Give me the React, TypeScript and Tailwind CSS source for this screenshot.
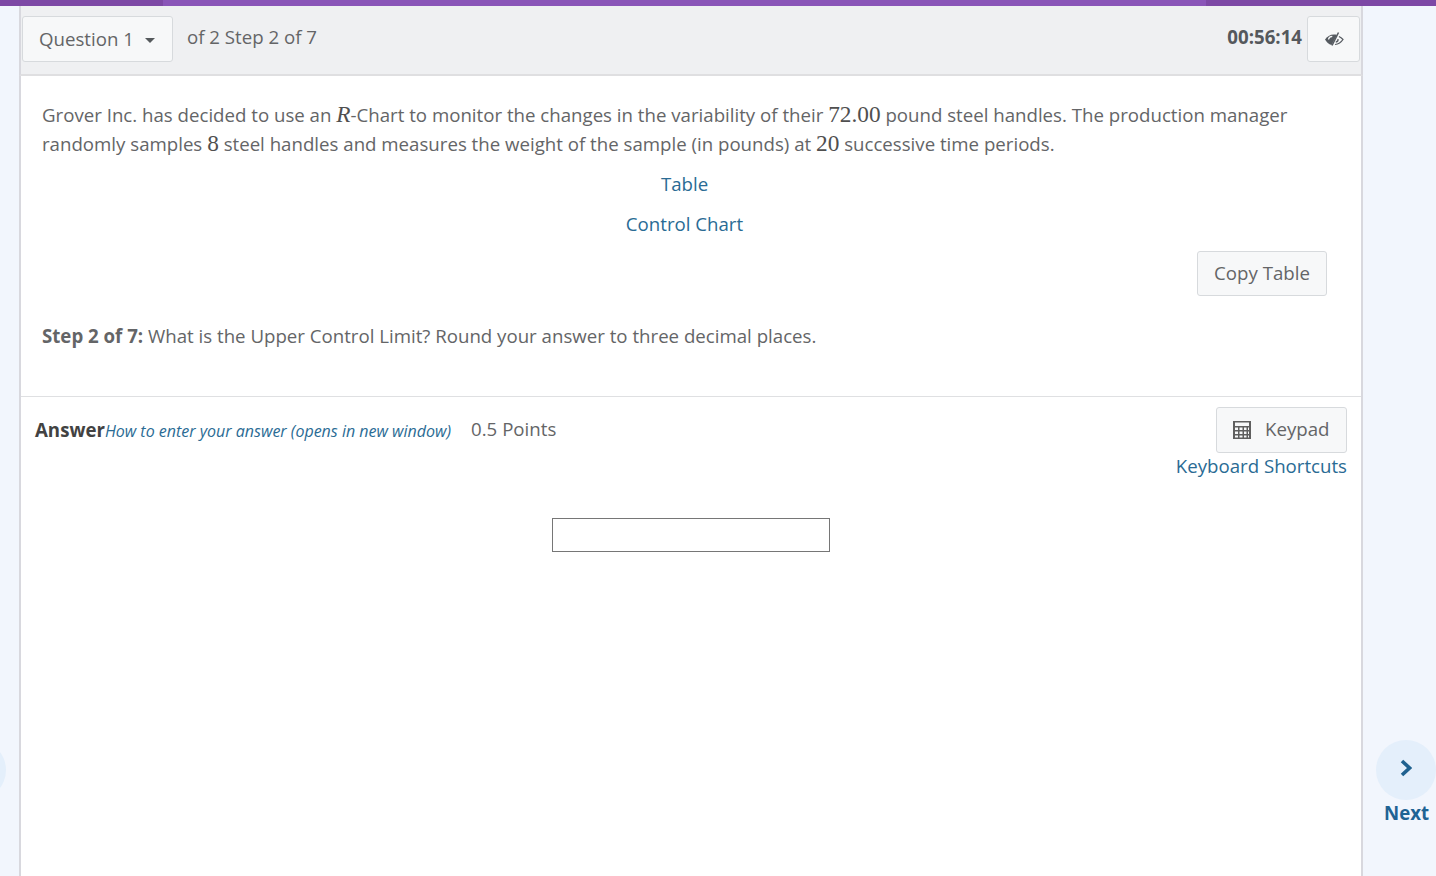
import React from "react";

const font = { fontFamily: '"Open Sans", sans-serif' };

function EyeSlash() {
  return (
    <svg width="20" height="16" viewBox="0 0 20 16" fill="none">
      <path d="M1 8.500C3 5.500 6 3.500 10 3.500c1 0 2 .1 3 .5L7.500 14C4.700 13.200 2.500 11 1 8.500Z" fill="#555a60" />
      <path d="M4.500 8.500c.2-1.800 1.500-3 3.800-3.200" stroke="#f7f8f9" strokeWidth="1.300" />
      <path d="M14.500 1.500 8 14.500" stroke="#555a60" strokeWidth="1.500" />
      <path d="M15 5.500c1.500.8 2.800 1.800 4 3-1.700 2.600-4.500 4.600-8 5" stroke="#555a60" strokeWidth="1.200" />
      <path d="M14 8c.3 1.500-.6 2.800-2.200 3.200" stroke="#555a60" strokeWidth="1.200" />
    </svg>
  );
}

function Calc() {
  return (
    <svg width="18" height="19" viewBox="0 0 18 19" className="mb-[2px]">
      <path fillRule="evenodd" fill="#5f5f5f" d="M0 1h18v18H0V1Zm2 1.500v3.500h14V2.500H2ZM2 7.500v2.500h3V7.500H2Zm4.500 0v2.500h3V7.500h-3Zm4.500 0v2.500h2.500V7.500H11Zm4 0v2.500h1V7.500h-1ZM2 11.500V14h3v-2.500H2Zm4.500 0V14h3v-2.500h-3Zm4.500 0V14h2.500v-2.500H11Zm4 0V14h1v-2.500h-1ZM2 15.500v2h3v-2H2Zm4.500 0v2h3v-2h-3Zm4.500 0v2h2.500v-2H11Zm4 0v2h1v-2h-1Z" />
    </svg>
  );
}

const M = ({ children, i }: { children: React.ReactNode; i?: boolean }) => (
  <span className={`font-['Liberation_Serif',serif] text-[23.3px] leading-none text-[#4f4f4f] ${i ? "italic" : ""}`}>{children}</span>
);

export default function App() {
  return (
    <div
      className="relative h-[876px] w-[1436px] overflow-hidden bg-[#f2f6fd] text-[18.67px] text-[#646567]"
      style={font}
    >
      <div className="flex h-[6px]">
        <div className="w-[163px] bg-[#7d48a5]" />
        <div className="w-[1043px] bg-[#8a55b8]" />
        <div className="flex-1 bg-[#7d48a5]" />
      </div>

      <div className="ml-[19px] w-[1344px]">
        <header className="flex h-[70px] items-start border-b-2 border-[#dfdfe1] border-l-2 border-r-2 border-l-[#d8d8de] border-r-[#d8d8de] bg-[#eff0f2] pl-[1px] pt-[10px]">
          <button className="flex h-[46px] w-[151px] items-center rounded-[3px] border border-[#d7dadd] bg-[#f7f8f9] pl-4 text-[#646567]">
            <span className="leading-none">Question 1</span>
            <span className="ml-[11px] mt-[3px] h-0 w-0 border-x-[5.5px] border-t-[5px] border-x-transparent border-t-[#55595c]" />
          </button>
          <span className="ml-[14px] mt-[7px] leading-[28px]">of 2 Step 2 of 7</span>
          <span className="ml-auto mt-[7px] text-[18.67px] font-bold leading-[28px] text-[#55585c]">00:56:14</span>
          <button className="ml-[5px] mr-[1px] flex h-[46px] w-[53px] items-center justify-center rounded-[3px] border border-[#d7dadd] bg-[#f7f8f9]">
            <EyeSlash />
          </button>
        </header>

        <main className="h-[800px] border-x-2 border-[#d8d8de] bg-white">
          <section className="h-[321px] border-b border-[#dfe0e2] px-[21px] pt-[24px]">
            <p className="leading-[29px]">
              Grover Inc. has decided to use an <M i>R</M>-Chart to monitor the changes in the variability of their{" "}
              <M>72.00</M> pound steel handles. The production manager randomly samples <M>8</M> steel handles and
              measures the weight of the sample (in pounds) at <M>20</M> successive time periods.
            </p>
            <div className="mt-[11px] flex flex-col items-center text-[#2a6b94]">
              <a className="pr-[13px] leading-[29px]">Table</a>
              <a className="mt-[11px] pr-[13px] leading-[29px]">Control Chart</a>
            </div>
            <div className="mt-[13px] flex justify-end pr-[13px]">
              <button className="h-[45px] w-[130px] rounded-[3px] border border-[#d7dadd] bg-[#f7f8f9] pb-[1px] text-[#646567]">
                Copy Table
              </button>
            </div>
            <p className="mt-[25px] leading-[29px]">
              <strong className="font-bold">Step 2 of 7:</strong> What is the Upper Control Limit? Round your answer to
              three decimal places.
            </p>
          </section>

          <section className="relative pl-[14px] pr-[14px] pt-[10px]">
            <div className="flex items-start">
              <div className="mt-[8px] flex items-baseline">
                <strong className="font-bold leading-[29px] text-[#424242]">Answer</strong>
                <a className="text-[16px] italic text-[#2a6b94]">How to enter your answer (opens in new window)</a>
                <span className="ml-[20px] -translate-y-px">0.5 Points</span>
              </div>
              <div className="ml-auto flex flex-col items-end">
                <button className="flex h-[46px] w-[131px] items-center rounded-[3px] border border-[#d7dadd] bg-[#f7f8f9] pl-4">
                  <Calc />
                  <span className="ml-[14px] pb-[2px]">Keypad</span>
                </button>
                <a className="leading-[26px] text-[#2a6b94]">Keyboard Shortcuts</a>
              </div>
            </div>
            <div className="mt-[39px] flex">
              <input className="ml-[517px] h-[34px] w-[278px] border border-[#767676] bg-white" aria-label="Answer" />
            </div>
          </section>
        </main>
      </div>

      <div className="absolute left-[-54px] top-[740px] h-[60px] w-[60px] rounded-full bg-[#e4effb]" />

      <div className="absolute left-[1376px] top-[740px] flex h-[60px] w-[60px] items-center justify-center rounded-full bg-[#e4effb] pb-[5px]">
        <svg width="12" height="18" viewBox="0 0 12 18" fill="none">
          <path d="M2 2 9.500 9 2 16" stroke="#1f618f" strokeWidth="3.600" />
        </svg>
      </div>
      <span className="absolute left-[1384px] top-[800px] text-[18.67px] font-bold leading-[26px] text-[#1f6394]">Next</span>
    </div>
  );
}
